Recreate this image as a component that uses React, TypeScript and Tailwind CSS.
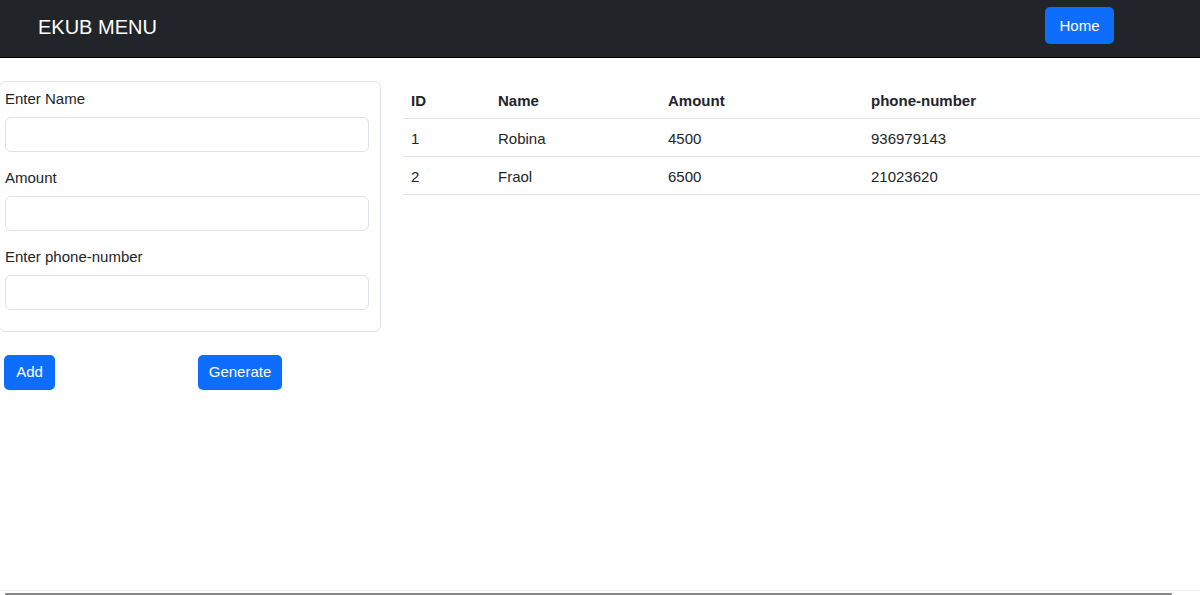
import React from "react";

const rows = [
  { id: 1, name: "Robina", amount: 4500, phone: "936979143" },
  { id: 2, name: "Fraol", amount: 6500, phone: "21023620" },
];

function Field({ label }: { label: string }) {
  return (
    <div className="mb-[15px]">
      <label className="block text-[15px] leading-[22px] mb-[7px]">{label}</label>
      <input
        type="text"
        className="block w-full h-[35px] rounded-[6px] border border-[#dee2e6] bg-white px-3 outline-none"
      />
    </div>
  );
}

export default function App() {
  return (
    <div
      className="h-[595px] flex flex-col bg-white text-[#212529] overflow-hidden"
      style={{ fontFamily: '"Liberation Sans", Arial, sans-serif' }}
    >
      {/* NAVBAR */}
      <nav className="h-[58px] shrink-0 bg-[#212529] border-b border-black flex items-start justify-between">
        <span className="ml-[38px] mt-[14px] text-[20px] leading-[26px] text-white">EKUB MENU</span>
        <button className="mr-[86px] mt-[7px] w-[69px] h-[37px] pt-[2px] rounded-[5px] bg-[#0d6efd] text-white text-[15px]">
          Home
        </button>
      </nav>

      {/* CONTENT */}
      <div className="flex items-start">
        <div className="w-[382px] -ml-px shrink-0">
          <div className="mt-[23px] border border-[#dee2e6] rounded-[6px] pt-[6px] pb-[6px] pl-[5px] pr-[11px]">
            <Field label="Enter Name" />
            <Field label="Amount" />
            <Field label="Enter phone-number" />
          </div>
          <div className="flex mt-[23px] pl-[5px]">
            <button className="w-[51px] h-[35px] rounded-[5px] bg-[#0d6efd] text-white text-[15px]">Add</button>
            <button className="ml-[143px] w-[84px] h-[35px] rounded-[5px] bg-[#0d6efd] text-white text-[15px]">
              Generate
            </button>
          </div>
        </div>

        <table className="ml-[22px] mt-[22px] flex-1 text-[15px] border-collapse">
          <thead>
            <tr className="border-b border-[#dee2e6] h-[38px]">
              <th className="w-[87px] px-2 pt-[4px] text-left font-bold">ID</th>
              <th className="w-[170px] px-2 pt-[4px] text-left font-bold">Name</th>
              <th className="w-[203px] px-2 pt-[4px] text-left font-bold">Amount</th>
              <th className="px-2 pt-[4px] text-left font-bold">phone-number</th>
            </tr>
          </thead>
          <tbody>
            {rows.map((r) => (
              <tr key={r.id} className="border-b border-[#dee2e6] h-[38px]">
                <td className="px-2 pt-[4px]">{r.id}</td>
                <td className="px-2 pt-[4px]">{r.name}</td>
                <td className="px-2 pt-[4px]">{r.amount}</td>
                <td className="px-2 pt-[4px]">{r.phone}</td>
              </tr>
            ))}
          </tbody>
        </table>
      </div>

      {/* horizontal scrollbar */}
      <div className="mt-auto h-[5px] border-t border-[#f0f0f0]">
        <div className="ml-[5px] mt-[2px] w-[1167px] h-[2px] bg-[#858585] rounded-full" />
      </div>
    </div>
  );
}
